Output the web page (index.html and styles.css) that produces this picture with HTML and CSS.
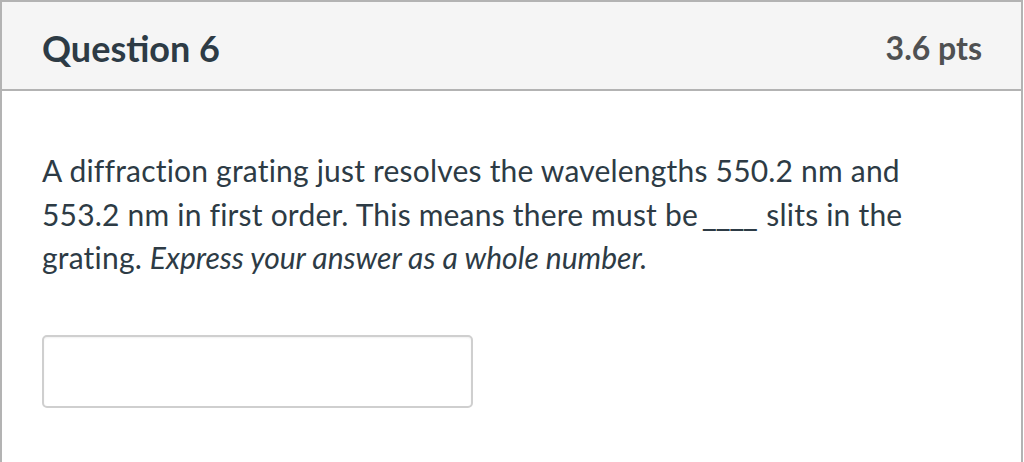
FILE: index.html
```html
<!DOCTYPE html>
<html lang="en">
<head>
<meta charset="utf-8">
<title>Question 6</title>
<link rel="stylesheet" href="styles.css">
</head>
<body>
<div class="question">
  <div class="header">
    <h2 class="title">Ques&zwnj;tion 6</h2>
    <div class="pts">3.6 pts</div>
  </div>
  <div class="body">
    <p class="text">A diffract&zwnj;ion grating just resolves the wavelengths 550.2 nm and 553.2 nm in first order. This means there must be <span class="blank">____</span> slits in the grating. <em>Express your answer as a whole number.</em></p>
    <div class="answer"><input class="input" type="text" aria-label="Answer"></div>
  </div>
</div>
</body>
</html>
```
FILE: styles.css
```css
html, body {
  margin: 0;
  padding: 0;
  background: #ffffff;
}
body {
  font-family: Lato, "Noto Sans", sans-serif;
  color: #2d3b45;
}
.question {
  width: 1023px;
  box-sizing: border-box;
  height: 470px;
  border: 2px solid #b3b3b3;
  border-bottom: none;
}
.header {
  height: 89px;
  background: #f5f5f5;
  border-bottom: 2px solid #b3b3b3;
  display: flex;
  align-items: center;
  justify-content: space-between;
  padding: 4px 39px 0 40px;
  box-sizing: border-box;
}
.title {
  margin: 0;
  font-size: 36px;
  font-weight: 700;
  color: #2d3b45;
}
.pts {
  font-size: 32px;
  font-weight: 700;
  color: #4f5152;
}
.body {
  padding: 58px 40px 0 40px;
}
.text {
  margin: 0;
  font-size: 30px;
  line-height: 43px;
  letter-spacing: 0.2px;
  max-width: 915px;
}
.text em {
  font-style: italic;
  letter-spacing: 0;
}
.blank {
  letter-spacing: -1.5px;
  font-size: 33px;
  margin-left: -4px;
  margin-right: 2px;
}
.answer {
  margin-top: 56px;
}
.input {
  width: 431px;
  height: 73px;
  box-sizing: border-box;
  border: 2px solid #cfcfcf;
  border-radius: 5px;
  background: #fff;
  box-shadow: inset 0 1px 2px rgba(0,0,0,0.06);
  display: block;
}
```
